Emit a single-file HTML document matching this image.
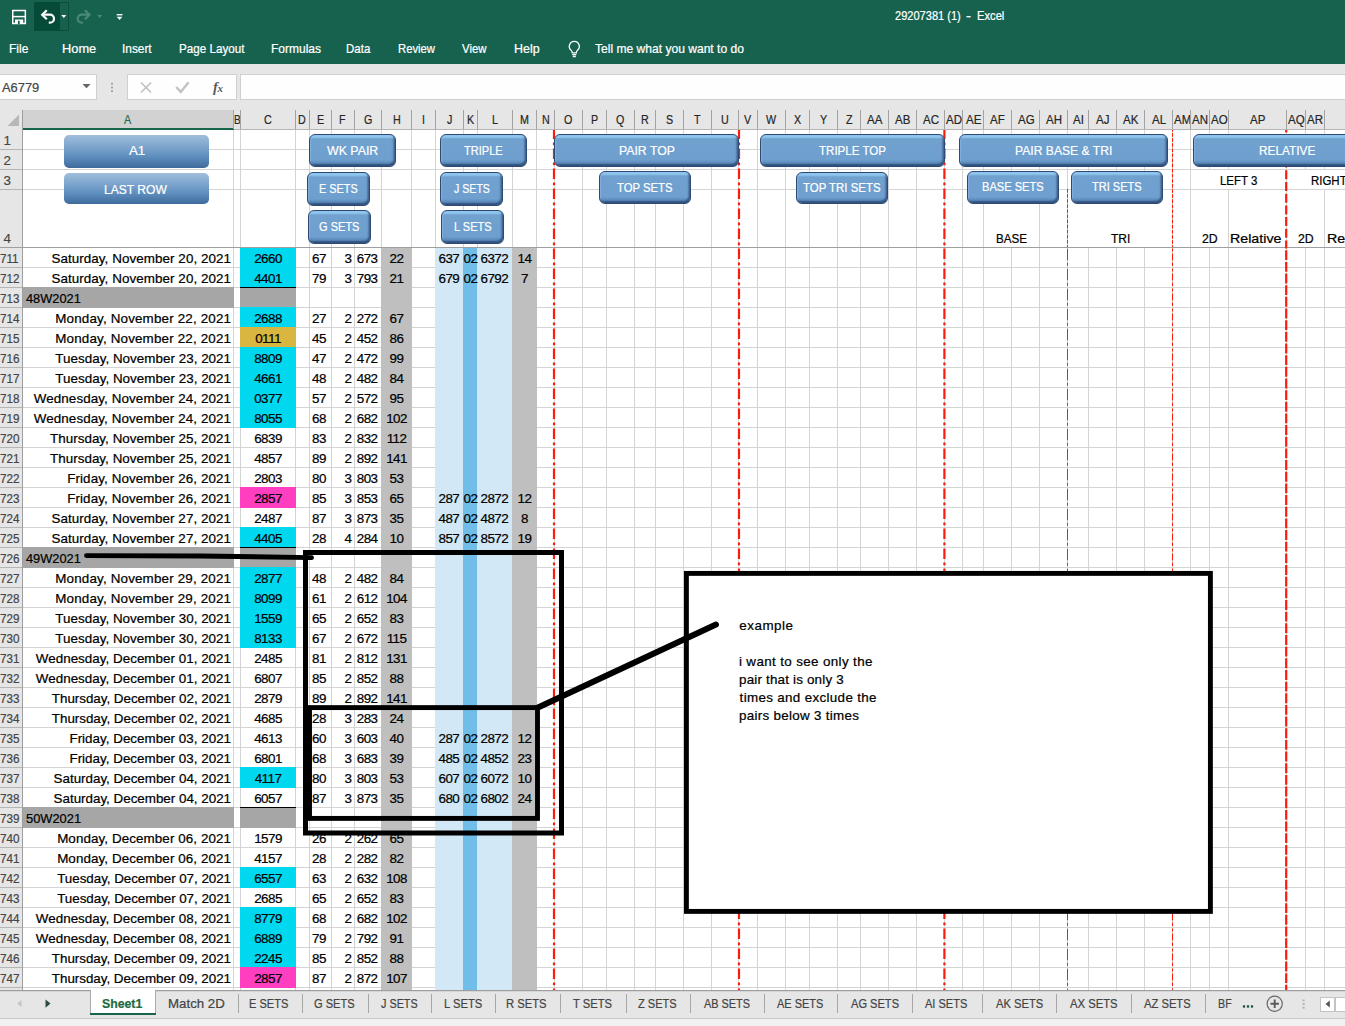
<!DOCTYPE html>
<html lang="en"><head><meta charset="utf-8"><title>29207381 (1) - Excel</title>
<style>

html,body{margin:0;padding:0}
body{width:1345px;height:1026px;overflow:hidden;background:#fff;position:relative;font-family:"Liberation Sans",sans-serif;color:#000}
div,span{box-sizing:border-box}
.ab,.t,.f,.v,.h,.x{position:absolute}
.x{white-space:pre;transform-origin:0 50%;-webkit-text-stroke:0.22px currentColor}
.t{white-space:pre;line-height:20px;height:20px;font-size:13.4px;overflow:visible;-webkit-text-stroke:0.22px currentColor}
.n{letter-spacing:-0.55px}
.r{text-align:right}.c{text-align:center}
.v{width:1px;background:#d4d4d4}
.h{height:1px;background:#d4d4d4}
.ui{color:#fff}
.ch{top:110px;height:18px;line-height:19px;font-size:13.4px;color:#444;text-align:center;position:absolute;white-space:pre}
.rh{left:0;width:22px;position:absolute;font-size:13.4px;color:#444;-webkit-text-stroke:0.15px currentColor;white-space:pre;line-height:20px;height:20px}
.btn{position:absolute;border-radius:6px;
 background:linear-gradient(#8fc6ee 0,#8fc6ee 2px,#70a1cf 4px,#6e9fce 80%,#5b89ba 92%,#46709f 100%);
 border:1.5px solid #2e4a74;box-shadow:inset -1.5px -2px 1.5px rgba(30,55,95,.6), inset 1px 0 1px rgba(150,200,240,.5)}
.gbtn{position:absolute;border-radius:5px;
 background:linear-gradient(#a1bedb 0,#7da5cd 35%,#5f8fbf 65%,#3e6b9b 100%)}
.bt{color:#fff}
.tab{color:#444}
.sep{position:absolute;top:994px;width:1px;height:19px;background:#a6a6a6}

</style></head><body>
<div class="ab" style="left:0;top:0;width:1345px;height:64px;background:#17614f"></div>
<div class="ab" style="left:34px;top:2px;width:35px;height:29px;background:#064b37"></div>
<div class="ab" style="left:60px;top:2px;width:9px;height:29px;background:#17604e;border:1px solid #0b4f3b;border-left:0"></div>
<svg class="ab" style="left:0;top:0" width="140" height="34" viewBox="0 0 140 34">
<g fill="none" stroke="#fff" stroke-width="1.5">
<path d="M12.75 10.55h12.6v12.9h-12.6z"/>
<path d="M12.75 16.6h12.6"/>
</g>
<path d="M15 19.6h8.2v4.4h-8.2z" fill="#fff"/>
<path d="M17.9 20.8h1.8v3.4h-1.8z" fill="#17614f"/>
<g fill="none" stroke="#fff" stroke-width="2.2" stroke-linejoin="miter">
<path d="M46.8 10.2l-4.6 4.5 4.6 4.5"/>
<path d="M43 14.7h7a4 4 0 0 1 0 8h-1.2"/>
</g>
<path d="M61.3 15.1h5l-2.5 3z" fill="#fff"/>
<g fill="none" stroke="#4a8976" stroke-width="2.2">
<path d="M84.9 10.2l4.6 4.5-4.6 4.5"/>
<path d="M88.7 14.7h-7a4 4 0 0 0 0 8h1.2"/>
</g>
<path d="M97.2 15.1h5l-2.5 3z" fill="#4a8976"/>
<path d="M116.7 14h5.7v1.4h-5.7z" fill="#fff"/>
<path d="M116.7 16.7h5.7l-2.85 3.4z" fill="#fff"/>
</svg>
<div class="x ui" style="left:895.10px;top:8px;font-size:12.4px;line-height:16px;height:16px;transform:scaleX(0.8921);margin-left:-0.55px;">29207381 (1)</div>
<div class="x ui" style="left:966.60px;top:8px;font-size:12.4px;line-height:16px;height:16px;transform:scaleX(1.2258);margin-left:-0.61px;">-</div>
<div class="x ui" style="left:977.60px;top:8px;font-size:12.4px;line-height:16px;height:16px;transform:scaleX(0.9027);margin-left:-0.90px;">Excel</div>
<div class="x ui" style="left:10.40px;top:41px;font-size:12.4px;line-height:17px;height:17px;transform:scaleX(0.9688);margin-left:-0.96px;">File</div>
<div class="x ui" style="left:63.50px;top:41px;font-size:12.4px;line-height:17px;height:17px;transform:scaleX(1.0362);margin-left:-1.03px;">Home</div>
<div class="x ui" style="left:123.40px;top:41px;font-size:12.4px;line-height:17px;height:17px;transform:scaleX(0.9570);margin-left:-1.07px;">Insert</div>
<div class="x ui" style="left:179.60px;top:41px;font-size:12.4px;line-height:17px;height:17px;transform:scaleX(0.9398);margin-left:-0.93px;">Page Layout</div>
<div class="x ui" style="left:271.50px;top:41px;font-size:12.4px;line-height:17px;height:17px;transform:scaleX(0.9685);margin-left:-0.96px;">Formulas</div>
<div class="x ui" style="left:347.40px;top:41px;font-size:12.4px;line-height:17px;height:17px;transform:scaleX(0.9273);margin-left:-0.92px;">Data</div>
<div class="x ui" style="left:398.70px;top:41px;font-size:12.4px;line-height:17px;height:17px;transform:scaleX(0.9098);margin-left:-0.90px;">Review</div>
<div class="x ui" style="left:462.30px;top:41px;font-size:12.4px;line-height:17px;height:17px;transform:scaleX(0.9190);margin-left:-0.00px;">View</div>
<div class="x ui" style="left:514.70px;top:41px;font-size:12.4px;line-height:17px;height:17px;transform:scaleX(1.0044);margin-left:-1.00px;">Help</div>
<div class="x ui" style="left:595.00px;top:41px;font-size:12.4px;line-height:17px;height:17px;transform:scaleX(0.9739);margin-left:-0.24px;">Tell me what you want to do</div>
<svg class="ab" style="left:566px;top:39px" width="16" height="20" viewBox="0 0 16 20"><g fill="none" stroke="#fff" stroke-width="1.3">
<path d="M8.3 2.4a5 5 0 0 0-3 9c.7.7.9 1.3.9 2.4h4.2c0-1.100.2-1.700.9-2.400a5 5 0 0 0-3-9z"/><path d="M6.300 15.700h4M6.800 17.500h3"/></g></svg>
<div class="ab" style="left:0;top:64px;width:1345px;height:46px;background:#e6e6e6"></div>
<div class="ab" style="left:-1px;top:74px;width:98px;height:26px;background:#fefefe;border:1px solid #d0d0d0"></div>
<div class="x " style="left:2.40px;top:79px;font-size:13.3px;line-height:17px;height:17px;color:#444;transform:scaleX(0.9673);margin-left:-0.00px;">A6779</div>
<svg class="ab" style="left:82px;top:83px" width="10" height="7"><path d="M0.5 1h8l-4 4.2z" fill="#666"/></svg>
<svg class="ab" style="left:110px;top:82px" width="5" height="12"><g fill="#a2a2a2"><rect x="1" y="0.8" width="2" height="1.800"/><rect x="1" y="4.600" width="2" height="1.800"/><rect x="1" y="8.200" width="2" height="1.8"/></g></svg>
<div class="ab" style="left:127px;top:74px;width:110px;height:26px;background:#fefefe;border:1px solid #d0d0d0"></div>
<svg class="ab" style="left:139px;top:80px" width="90" height="15" viewBox="0 0 90 15"><g fill="none" stroke="#c2c2c2" stroke-width="1.7"><path d="M2 2.5l10 10M12 2.5l-10 10"/><path d="M37.200 7l4.600 5 7.800-9.800" stroke-width="2.4"/></g></svg>
<div class="ab" style="left:213px;top:78px;font-family:'Liberation Serif',serif;font-style:italic;font-weight:bold;font-size:14.5px;line-height:18px;color:#5a5a5a;white-space:pre;letter-spacing:-0.3px">f<span style="font-size:11px">x</span></div>
<div class="ab" style="left:240px;top:74px;width:1107px;height:26px;background:#fefefe;border:1px solid #d0d0d0"></div>
<div class="ab" style="left:0;top:110px;width:1345px;height:20px;background:#e6e6e6"></div>
<svg class="ab" style="left:7px;top:114px" width="13" height="13"><path d="M12 0.5v11.5h-11.5z" fill="#b8b8b8"/></svg>
<div class="ab" style="left:23px;top:110px;width:210px;height:18px;background:#d2d2d2"></div>
<div class="ab" style="left:23px;top:128px;width:211px;height:2px;background:#17664a"></div>
<div class="x " style="left:124.44px;top:110px;font-size:13.4px;line-height:19px;height:19px;color:#1f6e45;transform:scaleX(0.8000);margin-left:-0.00px;">A</div>
<div class="ab" style="left:233px;top:110px;width:1px;height:19px;background:#a3a3a3"></div>
<div class="x " style="left:234.70px;top:110px;font-size:13.4px;line-height:19px;height:19px;color:#262626;transform:scaleX(0.7532);margin-left:-0.81px;">B</div>
<div class="ab" style="left:240px;top:110px;width:1px;height:19px;background:#a3a3a3"></div>
<div class="x " style="left:264.60px;top:110px;font-size:13.4px;line-height:19px;height:19px;color:#262626;transform:scaleX(0.8000);margin-left:-0.54px;">C</div>
<div class="ab" style="left:295px;top:110px;width:1px;height:19px;background:#a3a3a3"></div>
<div class="x " style="left:299.31px;top:110px;font-size:13.4px;line-height:19px;height:19px;color:#262626;transform:scaleX(0.8000);margin-left:-0.86px;">D</div>
<div class="ab" style="left:309px;top:110px;width:1px;height:19px;background:#a3a3a3"></div>
<div class="x " style="left:317.58px;top:110px;font-size:13.4px;line-height:19px;height:19px;color:#262626;transform:scaleX(0.8000);margin-left:-0.86px;">E</div>
<div class="ab" style="left:331px;top:110px;width:1px;height:19px;background:#a3a3a3"></div>
<div class="x " style="left:340.35px;top:110px;font-size:13.4px;line-height:19px;height:19px;color:#262626;transform:scaleX(0.8000);margin-left:-0.86px;">F</div>
<div class="ab" style="left:354px;top:110px;width:1px;height:19px;background:#a3a3a3"></div>
<div class="x " style="left:364.49px;top:110px;font-size:13.4px;line-height:19px;height:19px;color:#262626;transform:scaleX(0.8000);margin-left:-0.54px;">G</div>
<div class="ab" style="left:381px;top:110px;width:1px;height:19px;background:#a3a3a3"></div>
<div class="x " style="left:393.47px;top:110px;font-size:13.4px;line-height:19px;height:19px;color:#262626;transform:scaleX(0.8000);margin-left:-0.86px;">H</div>
<div class="ab" style="left:411px;top:110px;width:1px;height:19px;background:#a3a3a3"></div>
<div class="x " style="left:422.96px;top:110px;font-size:13.4px;line-height:19px;height:19px;color:#262626;transform:scaleX(0.8000);margin-left:-0.96px;">I</div>
<div class="ab" style="left:435px;top:110px;width:1px;height:19px;background:#a3a3a3"></div>
<div class="x " style="left:447.28px;top:110px;font-size:13.4px;line-height:19px;height:19px;color:#262626;transform:scaleX(0.8000);margin-left:-0.16px;">J</div>
<div class="ab" style="left:463px;top:110px;width:1px;height:19px;background:#a3a3a3"></div>
<div class="x " style="left:467.39px;top:110px;font-size:13.4px;line-height:19px;height:19px;color:#262626;transform:scaleX(0.8000);margin-left:-0.86px;">K</div>
<div class="ab" style="left:477px;top:110px;width:1px;height:19px;background:#a3a3a3"></div>
<div class="x " style="left:492.61px;top:110px;font-size:13.4px;line-height:19px;height:19px;color:#262626;transform:scaleX(0.8000);margin-left:-0.86px;">L</div>
<div class="ab" style="left:512px;top:110px;width:1px;height:19px;background:#a3a3a3"></div>
<div class="x " style="left:520.88px;top:110px;font-size:13.4px;line-height:19px;height:19px;color:#262626;transform:scaleX(0.8000);margin-left:-0.86px;">M</div>
<div class="ab" style="left:536px;top:110px;width:1px;height:19px;background:#a3a3a3"></div>
<div class="x " style="left:542.47px;top:110px;font-size:13.4px;line-height:19px;height:19px;color:#262626;transform:scaleX(0.8000);margin-left:-0.86px;">N</div>
<div class="ab" style="left:554px;top:110px;width:1px;height:19px;background:#a3a3a3"></div>
<div class="x " style="left:564.83px;top:110px;font-size:13.4px;line-height:19px;height:19px;color:#262626;transform:scaleX(0.8000);margin-left:-0.48px;">O</div>
<div class="ab" style="left:582px;top:110px;width:1px;height:19px;background:#a3a3a3"></div>
<div class="x " style="left:591.63px;top:110px;font-size:13.4px;line-height:19px;height:19px;color:#262626;transform:scaleX(0.8000);margin-left:-0.86px;">P</div>
<div class="ab" style="left:606px;top:110px;width:1px;height:19px;background:#a3a3a3"></div>
<div class="x " style="left:616.83px;top:110px;font-size:13.4px;line-height:19px;height:19px;color:#262626;transform:scaleX(0.8000);margin-left:-0.48px;">Q</div>
<div class="ab" style="left:634px;top:110px;width:1px;height:19px;background:#a3a3a3"></div>
<div class="x " style="left:641.78px;top:110px;font-size:13.4px;line-height:19px;height:19px;color:#262626;transform:scaleX(0.8000);margin-left:-0.86px;">R</div>
<div class="ab" style="left:655px;top:110px;width:1px;height:19px;background:#a3a3a3"></div>
<div class="x " style="left:666.39px;top:110px;font-size:13.4px;line-height:19px;height:19px;color:#262626;transform:scaleX(0.8000);margin-left:-0.48px;">S</div>
<div class="ab" style="left:683px;top:110px;width:1px;height:19px;background:#a3a3a3"></div>
<div class="x " style="left:694.44px;top:110px;font-size:13.4px;line-height:19px;height:19px;color:#262626;transform:scaleX(0.8000);margin-left:-0.21px;">T</div>
<div class="ab" style="left:711px;top:110px;width:1px;height:19px;background:#a3a3a3"></div>
<div class="x " style="left:721.94px;top:110px;font-size:13.4px;line-height:19px;height:19px;color:#262626;transform:scaleX(0.8000);margin-left:-0.80px;">U</div>
<div class="ab" style="left:738px;top:110px;width:1px;height:19px;background:#a3a3a3"></div>
<div class="x " style="left:744.44px;top:110px;font-size:13.4px;line-height:19px;height:19px;color:#262626;transform:scaleX(0.8000);margin-left:-0.00px;">V</div>
<div class="ab" style="left:757px;top:110px;width:1px;height:19px;background:#a3a3a3"></div>
<div class="x " style="left:766.43px;top:110px;font-size:13.4px;line-height:19px;height:19px;color:#262626;transform:scaleX(0.8000);margin-left:-0.00px;">W</div>
<div class="ab" style="left:785px;top:110px;width:1px;height:19px;background:#a3a3a3"></div>
<div class="x " style="left:794.12px;top:110px;font-size:13.4px;line-height:19px;height:19px;color:#262626;transform:scaleX(0.8000);margin-left:-0.21px;">X</div>
<div class="ab" style="left:809px;top:110px;width:1px;height:19px;background:#a3a3a3"></div>
<div class="x " style="left:820.15px;top:110px;font-size:13.4px;line-height:19px;height:19px;color:#262626;transform:scaleX(0.8000);margin-left:-0.21px;">Y</div>
<div class="ab" style="left:837px;top:110px;width:1px;height:19px;background:#a3a3a3"></div>
<div class="x " style="left:846.05px;top:110px;font-size:13.4px;line-height:19px;height:19px;color:#262626;transform:scaleX(0.8000);margin-left:-0.32px;">Z</div>
<div class="ab" style="left:860px;top:110px;width:1px;height:19px;background:#a3a3a3"></div>
<div class="x " style="left:866.84px;top:110px;font-size:13.4px;line-height:19px;height:19px;color:#262626;transform:scaleX(0.8600);margin-left:-0.00px;">AA</div>
<div class="ab" style="left:888px;top:110px;width:1px;height:19px;background:#a3a3a3"></div>
<div class="x " style="left:895.12px;top:110px;font-size:13.4px;line-height:19px;height:19px;color:#262626;transform:scaleX(0.8600);margin-left:-0.00px;">AB</div>
<div class="ab" style="left:916px;top:110px;width:1px;height:19px;background:#a3a3a3"></div>
<div class="x " style="left:922.72px;top:110px;font-size:13.4px;line-height:19px;height:19px;color:#262626;transform:scaleX(0.8600);margin-left:-0.00px;">AC</div>
<div class="ab" style="left:944px;top:110px;width:1px;height:19px;background:#a3a3a3"></div>
<div class="x " style="left:946.20px;top:110px;font-size:13.4px;line-height:19px;height:19px;color:#262626;transform:scaleX(0.8600);margin-left:-0.00px;">AD</div>
<div class="ab" style="left:962px;top:110px;width:1px;height:19px;background:#a3a3a3"></div>
<div class="x " style="left:965.57px;top:110px;font-size:13.4px;line-height:19px;height:19px;color:#262626;transform:scaleX(0.8600);margin-left:-0.00px;">AE</div>
<div class="ab" style="left:983px;top:110px;width:1px;height:19px;background:#a3a3a3"></div>
<div class="x " style="left:990.36px;top:110px;font-size:13.4px;line-height:19px;height:19px;color:#262626;transform:scaleX(0.8600);margin-left:-0.00px;">AF</div>
<div class="ab" style="left:1011px;top:110px;width:1px;height:19px;background:#a3a3a3"></div>
<div class="x " style="left:1017.61px;top:110px;font-size:13.4px;line-height:19px;height:19px;color:#262626;transform:scaleX(0.8600);margin-left:-0.00px;">AG</div>
<div class="ab" style="left:1039px;top:110px;width:1px;height:19px;background:#a3a3a3"></div>
<div class="x " style="left:1045.95px;top:110px;font-size:13.4px;line-height:19px;height:19px;color:#262626;transform:scaleX(0.8600);margin-left:-0.00px;">AH</div>
<div class="ab" style="left:1067px;top:110px;width:1px;height:19px;background:#a3a3a3"></div>
<div class="x " style="left:1073.07px;top:110px;font-size:13.4px;line-height:19px;height:19px;color:#262626;transform:scaleX(0.8600);margin-left:-0.00px;">AI</div>
<div class="ab" style="left:1088px;top:110px;width:1px;height:19px;background:#a3a3a3"></div>
<div class="x " style="left:1096.19px;top:110px;font-size:13.4px;line-height:19px;height:19px;color:#262626;transform:scaleX(0.8600);margin-left:-0.00px;">AJ</div>
<div class="ab" style="left:1116px;top:110px;width:1px;height:19px;background:#a3a3a3"></div>
<div class="x " style="left:1122.87px;top:110px;font-size:13.4px;line-height:19px;height:19px;color:#262626;transform:scaleX(0.8600);margin-left:-0.00px;">AK</div>
<div class="ab" style="left:1144px;top:110px;width:1px;height:19px;background:#a3a3a3"></div>
<div class="x " style="left:1151.64px;top:110px;font-size:13.4px;line-height:19px;height:19px;color:#262626;transform:scaleX(0.8600);margin-left:-0.00px;">AL</div>
<div class="ab" style="left:1172px;top:110px;width:1px;height:19px;background:#a3a3a3"></div>
<div class="x " style="left:1174.20px;top:110px;font-size:13.4px;line-height:19px;height:19px;color:#262626;transform:scaleX(0.8600);margin-left:-0.00px;">AM</div>
<div class="ab" style="left:1190px;top:110px;width:1px;height:19px;background:#a3a3a3"></div>
<div class="x " style="left:1192.45px;top:110px;font-size:13.4px;line-height:19px;height:19px;color:#262626;transform:scaleX(0.8600);margin-left:-0.00px;">AN</div>
<div class="ab" style="left:1209px;top:110px;width:1px;height:19px;background:#a3a3a3"></div>
<div class="x " style="left:1211.20px;top:110px;font-size:13.4px;line-height:19px;height:19px;color:#262626;transform:scaleX(0.8600);margin-left:-0.00px;">AO</div>
<div class="ab" style="left:1228px;top:110px;width:1px;height:19px;background:#a3a3a3"></div>
<div class="x " style="left:1250.12px;top:110px;font-size:13.4px;line-height:19px;height:19px;color:#262626;transform:scaleX(0.8600);margin-left:-0.00px;">AP</div>
<div class="ab" style="left:1286px;top:110px;width:1px;height:19px;background:#a3a3a3"></div>
<div class="x " style="left:1288.20px;top:110px;font-size:13.4px;line-height:19px;height:19px;color:#262626;transform:scaleX(0.8600);margin-left:-0.00px;">AQ</div>
<div class="ab" style="left:1305px;top:110px;width:1px;height:19px;background:#a3a3a3"></div>
<div class="x " style="left:1307.25px;top:110px;font-size:13.4px;line-height:19px;height:19px;color:#262626;transform:scaleX(0.8600);margin-left:-0.00px;">AR</div>
<div class="ab" style="left:1324px;top:110px;width:1px;height:19px;background:#a3a3a3"></div>
<div class="ab" style="left:234px;top:129px;width:1111px;height:1px;background:#b5b5b5"></div>
<div class="ab" style="left:23px;top:130px;width:1322px;height:860px;background:#fff"></div>
<div class="v" style="left:233px;top:130px;height:860px"></div>
<div class="v" style="left:240px;top:130px;height:860px"></div>
<div class="v" style="left:295px;top:130px;height:860px"></div>
<div class="v" style="left:309px;top:130px;height:860px"></div>
<div class="v" style="left:331px;top:130px;height:860px"></div>
<div class="v" style="left:354px;top:130px;height:860px"></div>
<div class="v" style="left:381px;top:130px;height:860px"></div>
<div class="v" style="left:411px;top:130px;height:860px"></div>
<div class="v" style="left:435px;top:130px;height:860px"></div>
<div class="v" style="left:463px;top:130px;height:860px"></div>
<div class="v" style="left:477px;top:130px;height:860px"></div>
<div class="v" style="left:512px;top:130px;height:860px"></div>
<div class="v" style="left:536px;top:130px;height:860px"></div>
<div class="v" style="left:554px;top:130px;height:860px"></div>
<div class="v" style="left:582px;top:130px;height:860px"></div>
<div class="v" style="left:606px;top:130px;height:860px"></div>
<div class="v" style="left:634px;top:130px;height:860px"></div>
<div class="v" style="left:655px;top:130px;height:860px"></div>
<div class="v" style="left:683px;top:130px;height:860px"></div>
<div class="v" style="left:711px;top:130px;height:860px"></div>
<div class="v" style="left:738px;top:130px;height:860px"></div>
<div class="v" style="left:757px;top:130px;height:860px"></div>
<div class="v" style="left:785px;top:130px;height:860px"></div>
<div class="v" style="left:809px;top:130px;height:860px"></div>
<div class="v" style="left:837px;top:130px;height:860px"></div>
<div class="v" style="left:860px;top:130px;height:860px"></div>
<div class="v" style="left:888px;top:130px;height:860px"></div>
<div class="v" style="left:916px;top:130px;height:860px"></div>
<div class="v" style="left:944px;top:130px;height:860px"></div>
<div class="v" style="left:962px;top:130px;height:860px"></div>
<div class="v" style="left:983px;top:130px;height:860px"></div>
<div class="v" style="left:1011px;top:130px;height:860px"></div>
<div class="v" style="left:1039px;top:130px;height:860px"></div>
<div class="v" style="left:1067px;top:130px;height:860px"></div>
<div class="v" style="left:1088px;top:130px;height:860px"></div>
<div class="v" style="left:1116px;top:130px;height:860px"></div>
<div class="v" style="left:1144px;top:130px;height:860px"></div>
<div class="v" style="left:1172px;top:130px;height:860px"></div>
<div class="v" style="left:1190px;top:130px;height:860px"></div>
<div class="v" style="left:1209px;top:130px;height:860px"></div>
<div class="v" style="left:1228px;top:130px;height:860px"></div>
<div class="v" style="left:1286px;top:130px;height:860px"></div>
<div class="v" style="left:1305px;top:130px;height:860px"></div>
<div class="v" style="left:1324px;top:130px;height:860px"></div>
<div class="h" style="left:23px;top:149px;width:1322px"></div>
<div class="h" style="left:23px;top:169px;width:1322px"></div>
<div class="h" style="left:23px;top:189px;width:1322px"></div>
<div class="h" style="left:23px;top:267px;width:1322px"></div>
<div class="h" style="left:23px;top:287px;width:1322px"></div>
<div class="h" style="left:23px;top:307px;width:1322px"></div>
<div class="h" style="left:23px;top:327px;width:1322px"></div>
<div class="h" style="left:23px;top:347px;width:1322px"></div>
<div class="h" style="left:23px;top:367px;width:1322px"></div>
<div class="h" style="left:23px;top:387px;width:1322px"></div>
<div class="h" style="left:23px;top:407px;width:1322px"></div>
<div class="h" style="left:23px;top:427px;width:1322px"></div>
<div class="h" style="left:23px;top:447px;width:1322px"></div>
<div class="h" style="left:23px;top:467px;width:1322px"></div>
<div class="h" style="left:23px;top:487px;width:1322px"></div>
<div class="h" style="left:23px;top:507px;width:1322px"></div>
<div class="h" style="left:23px;top:527px;width:1322px"></div>
<div class="h" style="left:23px;top:547px;width:1322px"></div>
<div class="h" style="left:23px;top:567px;width:1322px"></div>
<div class="h" style="left:23px;top:587px;width:1322px"></div>
<div class="h" style="left:23px;top:607px;width:1322px"></div>
<div class="h" style="left:23px;top:627px;width:1322px"></div>
<div class="h" style="left:23px;top:647px;width:1322px"></div>
<div class="h" style="left:23px;top:667px;width:1322px"></div>
<div class="h" style="left:23px;top:687px;width:1322px"></div>
<div class="h" style="left:23px;top:707px;width:1322px"></div>
<div class="h" style="left:23px;top:727px;width:1322px"></div>
<div class="h" style="left:23px;top:747px;width:1322px"></div>
<div class="h" style="left:23px;top:767px;width:1322px"></div>
<div class="h" style="left:23px;top:787px;width:1322px"></div>
<div class="h" style="left:23px;top:807px;width:1322px"></div>
<div class="h" style="left:23px;top:827px;width:1322px"></div>
<div class="h" style="left:23px;top:847px;width:1322px"></div>
<div class="h" style="left:23px;top:867px;width:1322px"></div>
<div class="h" style="left:23px;top:887px;width:1322px"></div>
<div class="h" style="left:23px;top:907px;width:1322px"></div>
<div class="h" style="left:23px;top:927px;width:1322px"></div>
<div class="h" style="left:23px;top:947px;width:1322px"></div>
<div class="h" style="left:23px;top:967px;width:1322px"></div>
<div class="h" style="left:23px;top:987px;width:1322px"></div>
<div class="ab" style="left:1209px;top:170px;width:1px;height:19px;background:#fff"></div>
<div class="ab" style="left:1228px;top:170px;width:1px;height:19px;background:#fff"></div>
<div class="ab" style="left:1305px;top:170px;width:1px;height:19px;background:#fff"></div>
<div class="ab" style="left:1324px;top:170px;width:1px;height:19px;background:#fff"></div>
<div class="ab" style="left:1011px;top:190px;width:1px;height:57px;background:#fff"></div>
<div class="ab" style="left:1088px;top:190px;width:1px;height:57px;background:#fff"></div>
<div class="ab" style="left:1116px;top:190px;width:1px;height:57px;background:#fff"></div>
<div class="ab" style="left:1144px;top:190px;width:1px;height:57px;background:#fff"></div>
<div class="ab" style="left:1209px;top:190px;width:1px;height:57px;background:#fff"></div>
<div class="ab" style="left:1305px;top:190px;width:1px;height:57px;background:#fff"></div>
<div class="f" style="left:381px;top:247px;width:31px;height:743px;background:#bfbfbf"></div>
<div class="f" style="left:435px;top:247px;width:29px;height:743px;background:#d2e8f6"></div>
<div class="f" style="left:463px;top:247px;width:15px;height:743px;background:#6fbde8"></div>
<div class="f" style="left:477px;top:247px;width:36px;height:743px;background:#d2e8f6"></div>
<div class="f" style="left:512px;top:247px;width:25px;height:743px;background:#bfbfbf"></div>
<div class="f" style="left:240px;top:247px;width:56px;height:21px;background:#00d8f0"></div>
<div class="f" style="left:240px;top:267px;width:56px;height:21px;background:#00d8f0"></div>
<div class="f" style="left:22px;top:287px;width:212px;height:21px;background:#a6a6a6"></div>
<div class="f" style="left:240px;top:287px;width:56px;height:21px;background:#a6a6a6"></div>
<div class="f" style="left:240px;top:307px;width:56px;height:21px;background:#00d8f0"></div>
<div class="f" style="left:240px;top:327px;width:56px;height:21px;background:#d9b640"></div>
<div class="f" style="left:240px;top:347px;width:56px;height:21px;background:#00d8f0"></div>
<div class="f" style="left:240px;top:367px;width:56px;height:21px;background:#00d8f0"></div>
<div class="f" style="left:240px;top:387px;width:56px;height:21px;background:#00d8f0"></div>
<div class="f" style="left:240px;top:407px;width:56px;height:21px;background:#00d8f0"></div>
<div class="f" style="left:240px;top:487px;width:56px;height:21px;background:#ff3fc0"></div>
<div class="f" style="left:240px;top:527px;width:56px;height:21px;background:#00d8f0"></div>
<div class="f" style="left:22px;top:547px;width:212px;height:21px;background:#a6a6a6"></div>
<div class="f" style="left:240px;top:547px;width:56px;height:21px;background:#a6a6a6"></div>
<div class="f" style="left:240px;top:567px;width:56px;height:21px;background:#00d8f0"></div>
<div class="f" style="left:240px;top:587px;width:56px;height:21px;background:#00d8f0"></div>
<div class="f" style="left:240px;top:607px;width:56px;height:21px;background:#00d8f0"></div>
<div class="f" style="left:240px;top:627px;width:56px;height:21px;background:#00d8f0"></div>
<div class="f" style="left:240px;top:767px;width:56px;height:21px;background:#00d8f0"></div>
<div class="f" style="left:22px;top:807px;width:212px;height:21px;background:#a6a6a6"></div>
<div class="f" style="left:240px;top:807px;width:56px;height:21px;background:#a6a6a6"></div>
<div class="f" style="left:240px;top:867px;width:56px;height:21px;background:#00d8f0"></div>
<div class="f" style="left:240px;top:907px;width:56px;height:21px;background:#00d8f0"></div>
<div class="f" style="left:240px;top:927px;width:56px;height:21px;background:#00d8f0"></div>
<div class="f" style="left:240px;top:947px;width:56px;height:21px;background:#00d8f0"></div>
<div class="f" style="left:240px;top:967px;width:56px;height:21px;background:#ff3fc0"></div>
<div class="ab" style="left:240px;top:287px;width:56px;height:1px;background:#000"></div>
<div class="ab" style="left:240px;top:547px;width:56px;height:1px;background:#000"></div>
<div class="ab" style="left:240px;top:807px;width:56px;height:1px;background:#000"></div>
<div class="ab" style="left:0;top:130px;width:22px;height:860px;background:#e6e6e6"></div>
<div class="ab" style="left:22px;top:110px;width:1px;height:880px;background:#9f9f9f"></div>
<div class="ab" style="left:0;top:149px;width:22px;height:1px;background:#b5b5b5"></div>
<div class="ab" style="left:0;top:169px;width:22px;height:1px;background:#b5b5b5"></div>
<div class="ab" style="left:0;top:189px;width:22px;height:1px;background:#b5b5b5"></div>
<div class="ab" style="left:0;top:267px;width:22px;height:1px;background:#b5b5b5"></div>
<div class="ab" style="left:0;top:287px;width:22px;height:1px;background:#b5b5b5"></div>
<div class="ab" style="left:0;top:307px;width:22px;height:1px;background:#b5b5b5"></div>
<div class="ab" style="left:0;top:327px;width:22px;height:1px;background:#b5b5b5"></div>
<div class="ab" style="left:0;top:347px;width:22px;height:1px;background:#b5b5b5"></div>
<div class="ab" style="left:0;top:367px;width:22px;height:1px;background:#b5b5b5"></div>
<div class="ab" style="left:0;top:387px;width:22px;height:1px;background:#b5b5b5"></div>
<div class="ab" style="left:0;top:407px;width:22px;height:1px;background:#b5b5b5"></div>
<div class="ab" style="left:0;top:427px;width:22px;height:1px;background:#b5b5b5"></div>
<div class="ab" style="left:0;top:447px;width:22px;height:1px;background:#b5b5b5"></div>
<div class="ab" style="left:0;top:467px;width:22px;height:1px;background:#b5b5b5"></div>
<div class="ab" style="left:0;top:487px;width:22px;height:1px;background:#b5b5b5"></div>
<div class="ab" style="left:0;top:507px;width:22px;height:1px;background:#b5b5b5"></div>
<div class="ab" style="left:0;top:527px;width:22px;height:1px;background:#b5b5b5"></div>
<div class="ab" style="left:0;top:547px;width:22px;height:1px;background:#b5b5b5"></div>
<div class="ab" style="left:0;top:567px;width:22px;height:1px;background:#b5b5b5"></div>
<div class="ab" style="left:0;top:587px;width:22px;height:1px;background:#b5b5b5"></div>
<div class="ab" style="left:0;top:607px;width:22px;height:1px;background:#b5b5b5"></div>
<div class="ab" style="left:0;top:627px;width:22px;height:1px;background:#b5b5b5"></div>
<div class="ab" style="left:0;top:647px;width:22px;height:1px;background:#b5b5b5"></div>
<div class="ab" style="left:0;top:667px;width:22px;height:1px;background:#b5b5b5"></div>
<div class="ab" style="left:0;top:687px;width:22px;height:1px;background:#b5b5b5"></div>
<div class="ab" style="left:0;top:707px;width:22px;height:1px;background:#b5b5b5"></div>
<div class="ab" style="left:0;top:727px;width:22px;height:1px;background:#b5b5b5"></div>
<div class="ab" style="left:0;top:747px;width:22px;height:1px;background:#b5b5b5"></div>
<div class="ab" style="left:0;top:767px;width:22px;height:1px;background:#b5b5b5"></div>
<div class="ab" style="left:0;top:787px;width:22px;height:1px;background:#b5b5b5"></div>
<div class="ab" style="left:0;top:807px;width:22px;height:1px;background:#b5b5b5"></div>
<div class="ab" style="left:0;top:827px;width:22px;height:1px;background:#b5b5b5"></div>
<div class="ab" style="left:0;top:847px;width:22px;height:1px;background:#b5b5b5"></div>
<div class="ab" style="left:0;top:867px;width:22px;height:1px;background:#b5b5b5"></div>
<div class="ab" style="left:0;top:887px;width:22px;height:1px;background:#b5b5b5"></div>
<div class="ab" style="left:0;top:907px;width:22px;height:1px;background:#b5b5b5"></div>
<div class="ab" style="left:0;top:927px;width:22px;height:1px;background:#b5b5b5"></div>
<div class="ab" style="left:0;top:947px;width:22px;height:1px;background:#b5b5b5"></div>
<div class="ab" style="left:0;top:967px;width:22px;height:1px;background:#b5b5b5"></div>
<div class="ab" style="left:0;top:987px;width:22px;height:1px;background:#b5b5b5"></div>
<div class="rh" style="top:131px;padding-left:3.5px">1</div>
<div class="rh" style="top:151px;padding-left:3.5px">2</div>
<div class="rh" style="top:171px;padding-left:3.5px">3</div>
<div class="rh" style="top:229px;padding-left:3.5px">4</div>
<div class="x " style="left:0.90px;top:249px;font-size:13.4px;line-height:20px;height:20px;color:#444;transform:scaleX(0.8706);margin-left:-0.58px;">711</div>
<div class="x " style="left:0.90px;top:269px;font-size:13.4px;line-height:20px;height:20px;color:#444;transform:scaleX(0.8706);margin-left:-0.58px;">712</div>
<div class="x " style="left:0.90px;top:289px;font-size:13.4px;line-height:20px;height:20px;color:#444;transform:scaleX(0.8706);margin-left:-0.58px;">713</div>
<div class="x " style="left:0.90px;top:309px;font-size:13.4px;line-height:20px;height:20px;color:#444;transform:scaleX(0.8706);margin-left:-0.58px;">714</div>
<div class="x " style="left:0.90px;top:329px;font-size:13.4px;line-height:20px;height:20px;color:#444;transform:scaleX(0.8706);margin-left:-0.58px;">715</div>
<div class="x " style="left:0.90px;top:349px;font-size:13.4px;line-height:20px;height:20px;color:#444;transform:scaleX(0.8706);margin-left:-0.58px;">716</div>
<div class="x " style="left:0.90px;top:369px;font-size:13.4px;line-height:20px;height:20px;color:#444;transform:scaleX(0.8706);margin-left:-0.58px;">717</div>
<div class="x " style="left:0.90px;top:389px;font-size:13.4px;line-height:20px;height:20px;color:#444;transform:scaleX(0.8706);margin-left:-0.58px;">718</div>
<div class="x " style="left:0.90px;top:409px;font-size:13.4px;line-height:20px;height:20px;color:#444;transform:scaleX(0.8706);margin-left:-0.58px;">719</div>
<div class="x " style="left:0.90px;top:429px;font-size:13.4px;line-height:20px;height:20px;color:#444;transform:scaleX(0.8706);margin-left:-0.58px;">720</div>
<div class="x " style="left:0.90px;top:449px;font-size:13.4px;line-height:20px;height:20px;color:#444;transform:scaleX(0.8706);margin-left:-0.58px;">721</div>
<div class="x " style="left:0.90px;top:469px;font-size:13.4px;line-height:20px;height:20px;color:#444;transform:scaleX(0.8706);margin-left:-0.58px;">722</div>
<div class="x " style="left:0.90px;top:489px;font-size:13.4px;line-height:20px;height:20px;color:#444;transform:scaleX(0.8706);margin-left:-0.58px;">723</div>
<div class="x " style="left:0.90px;top:509px;font-size:13.4px;line-height:20px;height:20px;color:#444;transform:scaleX(0.8706);margin-left:-0.58px;">724</div>
<div class="x " style="left:0.90px;top:529px;font-size:13.4px;line-height:20px;height:20px;color:#444;transform:scaleX(0.8706);margin-left:-0.58px;">725</div>
<div class="x " style="left:0.90px;top:549px;font-size:13.4px;line-height:20px;height:20px;color:#444;transform:scaleX(0.8706);margin-left:-0.58px;">726</div>
<div class="x " style="left:0.90px;top:569px;font-size:13.4px;line-height:20px;height:20px;color:#444;transform:scaleX(0.8706);margin-left:-0.58px;">727</div>
<div class="x " style="left:0.90px;top:589px;font-size:13.4px;line-height:20px;height:20px;color:#444;transform:scaleX(0.8706);margin-left:-0.58px;">728</div>
<div class="x " style="left:0.90px;top:609px;font-size:13.4px;line-height:20px;height:20px;color:#444;transform:scaleX(0.8706);margin-left:-0.58px;">729</div>
<div class="x " style="left:0.90px;top:629px;font-size:13.4px;line-height:20px;height:20px;color:#444;transform:scaleX(0.8706);margin-left:-0.58px;">730</div>
<div class="x " style="left:0.90px;top:649px;font-size:13.4px;line-height:20px;height:20px;color:#444;transform:scaleX(0.8706);margin-left:-0.58px;">731</div>
<div class="x " style="left:0.90px;top:669px;font-size:13.4px;line-height:20px;height:20px;color:#444;transform:scaleX(0.8706);margin-left:-0.58px;">732</div>
<div class="x " style="left:0.90px;top:689px;font-size:13.4px;line-height:20px;height:20px;color:#444;transform:scaleX(0.8706);margin-left:-0.58px;">733</div>
<div class="x " style="left:0.90px;top:709px;font-size:13.4px;line-height:20px;height:20px;color:#444;transform:scaleX(0.8706);margin-left:-0.58px;">734</div>
<div class="x " style="left:0.90px;top:729px;font-size:13.4px;line-height:20px;height:20px;color:#444;transform:scaleX(0.8706);margin-left:-0.58px;">735</div>
<div class="x " style="left:0.90px;top:749px;font-size:13.4px;line-height:20px;height:20px;color:#444;transform:scaleX(0.8706);margin-left:-0.58px;">736</div>
<div class="x " style="left:0.90px;top:769px;font-size:13.4px;line-height:20px;height:20px;color:#444;transform:scaleX(0.8706);margin-left:-0.58px;">737</div>
<div class="x " style="left:0.90px;top:789px;font-size:13.4px;line-height:20px;height:20px;color:#444;transform:scaleX(0.8706);margin-left:-0.58px;">738</div>
<div class="x " style="left:0.90px;top:809px;font-size:13.4px;line-height:20px;height:20px;color:#444;transform:scaleX(0.8706);margin-left:-0.58px;">739</div>
<div class="x " style="left:0.90px;top:829px;font-size:13.4px;line-height:20px;height:20px;color:#444;transform:scaleX(0.8706);margin-left:-0.58px;">740</div>
<div class="x " style="left:0.90px;top:849px;font-size:13.4px;line-height:20px;height:20px;color:#444;transform:scaleX(0.8706);margin-left:-0.58px;">741</div>
<div class="x " style="left:0.90px;top:869px;font-size:13.4px;line-height:20px;height:20px;color:#444;transform:scaleX(0.8706);margin-left:-0.58px;">742</div>
<div class="x " style="left:0.90px;top:889px;font-size:13.4px;line-height:20px;height:20px;color:#444;transform:scaleX(0.8706);margin-left:-0.58px;">743</div>
<div class="x " style="left:0.90px;top:909px;font-size:13.4px;line-height:20px;height:20px;color:#444;transform:scaleX(0.8706);margin-left:-0.58px;">744</div>
<div class="x " style="left:0.90px;top:929px;font-size:13.4px;line-height:20px;height:20px;color:#444;transform:scaleX(0.8706);margin-left:-0.58px;">745</div>
<div class="x " style="left:0.90px;top:949px;font-size:13.4px;line-height:20px;height:20px;color:#444;transform:scaleX(0.8706);margin-left:-0.58px;">746</div>
<div class="x " style="left:0.90px;top:969px;font-size:13.4px;line-height:20px;height:20px;color:#444;transform:scaleX(0.8706);margin-left:-0.58px;">747</div>
<div class="ab" style="left:0;top:247px;width:1345px;height:1px;background:#9f9f9f"></div>
<div class="x " style="left:52.00px;top:249px;font-size:13.4px;line-height:20px;height:20px;letter-spacing:0.075px;margin-left:-0.60px;">Saturday, November 20, 2021</div>
<div class="t c n" style="left:221px;width:94px;top:249px">2660</div>
<div class="t n" style="left:312.0px;top:249px">67</div>
<div class="t r n" style="left:232px;width:119.5px;top:249px">3</div>
<div class="t n" style="left:356.8px;top:249px">673</div>
<div class="t c n" style="left:362px;width:69px;top:249px">22</div>
<div class="t n" style="left:438.5px;top:249px">637</div>
<div class="t c n" style="left:444px;width:53px;top:249px">02</div>
<div class="t n" style="left:480.5px;top:249px">6372</div>
<div class="t c n" style="left:493px;width:63px;top:249px">14</div>
<div class="x " style="left:52.00px;top:269px;font-size:13.4px;line-height:20px;height:20px;letter-spacing:0.075px;margin-left:-0.60px;">Saturday, November 20, 2021</div>
<div class="t c n" style="left:221px;width:94px;top:269px">4401</div>
<div class="t n" style="left:312.0px;top:269px">79</div>
<div class="t r n" style="left:232px;width:119.5px;top:269px">3</div>
<div class="t n" style="left:356.8px;top:269px">793</div>
<div class="t c n" style="left:362px;width:69px;top:269px">21</div>
<div class="t n" style="left:438.5px;top:269px">679</div>
<div class="t c n" style="left:444px;width:53px;top:269px">02</div>
<div class="t n" style="left:480.5px;top:269px">6792</div>
<div class="t c n" style="left:493px;width:63px;top:269px">7</div>
<div class="x " style="left:26.00px;top:289px;font-size:13.4px;line-height:20px;height:20px;transform:scaleX(0.9561);margin-left:-0.26px;">48W2021</div>
<div class="x " style="left:56.30px;top:309px;font-size:13.4px;line-height:20px;height:20px;letter-spacing:0.170px;margin-left:-1.07px;">Monday, November 22, 2021</div>
<div class="t c n" style="left:221px;width:94px;top:309px">2688</div>
<div class="t n" style="left:312.0px;top:309px">27</div>
<div class="t r n" style="left:232px;width:119.5px;top:309px">2</div>
<div class="t n" style="left:356.8px;top:309px">272</div>
<div class="t c n" style="left:362px;width:69px;top:309px">67</div>
<div class="x " style="left:56.30px;top:329px;font-size:13.4px;line-height:20px;height:20px;letter-spacing:0.170px;margin-left:-1.07px;">Monday, November 22, 2021</div>
<div class="t c n" style="left:221px;width:94px;top:329px">0111</div>
<div class="t n" style="left:312.0px;top:329px">45</div>
<div class="t r n" style="left:232px;width:119.5px;top:329px">2</div>
<div class="t n" style="left:356.8px;top:329px">452</div>
<div class="t c n" style="left:362px;width:69px;top:329px">86</div>
<div class="x " style="left:55.60px;top:349px;font-size:13.4px;line-height:20px;height:20px;letter-spacing:0.031px;margin-left:-0.27px;">Tuesday, November 23, 2021</div>
<div class="t c n" style="left:221px;width:94px;top:349px">8809</div>
<div class="t n" style="left:312.0px;top:349px">47</div>
<div class="t r n" style="left:232px;width:119.5px;top:349px">2</div>
<div class="t n" style="left:356.8px;top:349px">472</div>
<div class="t c n" style="left:362px;width:69px;top:349px">99</div>
<div class="x " style="left:55.60px;top:369px;font-size:13.4px;line-height:20px;height:20px;letter-spacing:0.031px;margin-left:-0.27px;">Tuesday, November 23, 2021</div>
<div class="t c n" style="left:221px;width:94px;top:369px">4661</div>
<div class="t n" style="left:312.0px;top:369px">48</div>
<div class="t r n" style="left:232px;width:119.5px;top:369px">2</div>
<div class="t n" style="left:356.8px;top:369px">482</div>
<div class="t c n" style="left:362px;width:69px;top:369px">84</div>
<div class="x " style="left:33.70px;top:389px;font-size:13.4px;line-height:20px;height:20px;letter-spacing:0.103px;margin-left:-0.00px;">Wednesday, November 24, 2021</div>
<div class="t c n" style="left:221px;width:94px;top:389px">0377</div>
<div class="t n" style="left:312.0px;top:389px">57</div>
<div class="t r n" style="left:232px;width:119.5px;top:389px">2</div>
<div class="t n" style="left:356.8px;top:389px">572</div>
<div class="t c n" style="left:362px;width:69px;top:389px">95</div>
<div class="x " style="left:33.70px;top:409px;font-size:13.4px;line-height:20px;height:20px;letter-spacing:0.103px;margin-left:-0.00px;">Wednesday, November 24, 2021</div>
<div class="t c n" style="left:221px;width:94px;top:409px">8055</div>
<div class="t n" style="left:312.0px;top:409px">68</div>
<div class="t r n" style="left:232px;width:119.5px;top:409px">2</div>
<div class="t n" style="left:356.8px;top:409px">682</div>
<div class="t c n" style="left:362px;width:69px;top:409px">102</div>
<div class="x " style="left:50.20px;top:429px;font-size:13.4px;line-height:20px;height:20px;letter-spacing:0.047px;margin-left:-0.27px;">Thursday, November 25, 2021</div>
<div class="t c n" style="left:221px;width:94px;top:429px">6839</div>
<div class="t n" style="left:312.0px;top:429px">83</div>
<div class="t r n" style="left:232px;width:119.5px;top:429px">2</div>
<div class="t n" style="left:356.8px;top:429px">832</div>
<div class="t c n" style="left:362px;width:69px;top:429px">112</div>
<div class="x " style="left:50.20px;top:449px;font-size:13.4px;line-height:20px;height:20px;letter-spacing:0.047px;margin-left:-0.27px;">Thursday, November 25, 2021</div>
<div class="t c n" style="left:221px;width:94px;top:449px">4857</div>
<div class="t n" style="left:312.0px;top:449px">89</div>
<div class="t r n" style="left:232px;width:119.5px;top:449px">2</div>
<div class="t n" style="left:356.8px;top:449px">892</div>
<div class="t c n" style="left:362px;width:69px;top:449px">141</div>
<div class="x " style="left:68.20px;top:469px;font-size:13.4px;line-height:20px;height:20px;letter-spacing:0.110px;margin-left:-1.07px;">Friday, November 26, 2021</div>
<div class="t c n" style="left:221px;width:94px;top:469px">2803</div>
<div class="t n" style="left:312.0px;top:469px">80</div>
<div class="t r n" style="left:232px;width:119.5px;top:469px">3</div>
<div class="t n" style="left:356.8px;top:469px">803</div>
<div class="t c n" style="left:362px;width:69px;top:469px">53</div>
<div class="x " style="left:68.20px;top:489px;font-size:13.4px;line-height:20px;height:20px;letter-spacing:0.110px;margin-left:-1.07px;">Friday, November 26, 2021</div>
<div class="t c n" style="left:221px;width:94px;top:489px">2857</div>
<div class="t n" style="left:312.0px;top:489px">85</div>
<div class="t r n" style="left:232px;width:119.5px;top:489px">3</div>
<div class="t n" style="left:356.8px;top:489px">853</div>
<div class="t c n" style="left:362px;width:69px;top:489px">65</div>
<div class="t n" style="left:438.5px;top:489px">287</div>
<div class="t c n" style="left:444px;width:53px;top:489px">02</div>
<div class="t n" style="left:480.5px;top:489px">2872</div>
<div class="t c n" style="left:493px;width:63px;top:489px">12</div>
<div class="x " style="left:52.00px;top:509px;font-size:13.4px;line-height:20px;height:20px;letter-spacing:0.075px;margin-left:-0.60px;">Saturday, November 27, 2021</div>
<div class="t c n" style="left:221px;width:94px;top:509px">2487</div>
<div class="t n" style="left:312.0px;top:509px">87</div>
<div class="t r n" style="left:232px;width:119.5px;top:509px">3</div>
<div class="t n" style="left:356.8px;top:509px">873</div>
<div class="t c n" style="left:362px;width:69px;top:509px">35</div>
<div class="t n" style="left:438.5px;top:509px">487</div>
<div class="t c n" style="left:444px;width:53px;top:509px">02</div>
<div class="t n" style="left:480.5px;top:509px">4872</div>
<div class="t c n" style="left:493px;width:63px;top:509px">8</div>
<div class="x " style="left:52.00px;top:529px;font-size:13.4px;line-height:20px;height:20px;letter-spacing:0.075px;margin-left:-0.60px;">Saturday, November 27, 2021</div>
<div class="t c n" style="left:221px;width:94px;top:529px">4405</div>
<div class="t n" style="left:312.0px;top:529px">28</div>
<div class="t r n" style="left:232px;width:119.5px;top:529px">4</div>
<div class="t n" style="left:356.8px;top:529px">284</div>
<div class="t c n" style="left:362px;width:69px;top:529px">10</div>
<div class="t n" style="left:438.5px;top:529px">857</div>
<div class="t c n" style="left:444px;width:53px;top:529px">02</div>
<div class="t n" style="left:480.5px;top:529px">8572</div>
<div class="t c n" style="left:493px;width:63px;top:529px">19</div>
<div class="x " style="left:26.00px;top:549px;font-size:13.4px;line-height:20px;height:20px;transform:scaleX(0.9561);margin-left:-0.26px;">49W2021</div>
<div class="x " style="left:56.30px;top:569px;font-size:13.4px;line-height:20px;height:20px;letter-spacing:0.170px;margin-left:-1.07px;">Monday, November 29, 2021</div>
<div class="t c n" style="left:221px;width:94px;top:569px">2877</div>
<div class="t n" style="left:312.0px;top:569px">48</div>
<div class="t r n" style="left:232px;width:119.5px;top:569px">2</div>
<div class="t n" style="left:356.8px;top:569px">482</div>
<div class="t c n" style="left:362px;width:69px;top:569px">84</div>
<div class="x " style="left:56.30px;top:589px;font-size:13.4px;line-height:20px;height:20px;letter-spacing:0.170px;margin-left:-1.07px;">Monday, November 29, 2021</div>
<div class="t c n" style="left:221px;width:94px;top:589px">8099</div>
<div class="t n" style="left:312.0px;top:589px">61</div>
<div class="t r n" style="left:232px;width:119.5px;top:589px">2</div>
<div class="t n" style="left:356.8px;top:589px">612</div>
<div class="t c n" style="left:362px;width:69px;top:589px">104</div>
<div class="x " style="left:55.60px;top:609px;font-size:13.4px;line-height:20px;height:20px;letter-spacing:0.031px;margin-left:-0.27px;">Tuesday, November 30, 2021</div>
<div class="t c n" style="left:221px;width:94px;top:609px">1559</div>
<div class="t n" style="left:312.0px;top:609px">65</div>
<div class="t r n" style="left:232px;width:119.5px;top:609px">2</div>
<div class="t n" style="left:356.8px;top:609px">652</div>
<div class="t c n" style="left:362px;width:69px;top:609px">83</div>
<div class="x " style="left:55.60px;top:629px;font-size:13.4px;line-height:20px;height:20px;letter-spacing:0.031px;margin-left:-0.27px;">Tuesday, November 30, 2021</div>
<div class="t c n" style="left:221px;width:94px;top:629px">8133</div>
<div class="t n" style="left:312.0px;top:629px">67</div>
<div class="t r n" style="left:232px;width:119.5px;top:629px">2</div>
<div class="t n" style="left:356.8px;top:629px">672</div>
<div class="t c n" style="left:362px;width:69px;top:629px">115</div>
<div class="x " style="left:35.80px;top:649px;font-size:13.4px;line-height:20px;height:20px;letter-spacing:0.025px;margin-left:-0.00px;">Wednesday, December 01, 2021</div>
<div class="t c n" style="left:221px;width:94px;top:649px">2485</div>
<div class="t n" style="left:312.0px;top:649px">81</div>
<div class="t r n" style="left:232px;width:119.5px;top:649px">2</div>
<div class="t n" style="left:356.8px;top:649px">812</div>
<div class="t c n" style="left:362px;width:69px;top:649px">131</div>
<div class="x " style="left:35.80px;top:669px;font-size:13.4px;line-height:20px;height:20px;letter-spacing:0.025px;margin-left:-0.00px;">Wednesday, December 01, 2021</div>
<div class="t c n" style="left:221px;width:94px;top:669px">6807</div>
<div class="t n" style="left:312.0px;top:669px">85</div>
<div class="t r n" style="left:232px;width:119.5px;top:669px">2</div>
<div class="t n" style="left:356.8px;top:669px">852</div>
<div class="t c n" style="left:362px;width:69px;top:669px">88</div>
<div class="x " style="left:52.10px;top:689px;font-size:13.4px;line-height:20px;height:20px;letter-spacing:-0.027px;margin-left:-0.27px;">Thursday, December 02, 2021</div>
<div class="t c n" style="left:221px;width:94px;top:689px">2879</div>
<div class="t n" style="left:312.0px;top:689px">89</div>
<div class="t r n" style="left:232px;width:119.5px;top:689px">2</div>
<div class="t n" style="left:356.8px;top:689px">892</div>
<div class="t c n" style="left:362px;width:69px;top:689px">141</div>
<div class="x " style="left:52.10px;top:709px;font-size:13.4px;line-height:20px;height:20px;letter-spacing:-0.027px;margin-left:-0.27px;">Thursday, December 02, 2021</div>
<div class="t c n" style="left:221px;width:94px;top:709px">4685</div>
<div class="t n" style="left:312.0px;top:709px">28</div>
<div class="t r n" style="left:232px;width:119.5px;top:709px">3</div>
<div class="t n" style="left:356.8px;top:709px">283</div>
<div class="t c n" style="left:362px;width:69px;top:709px">24</div>
<div class="x " style="left:70.50px;top:729px;font-size:13.4px;line-height:20px;height:20px;letter-spacing:0.014px;margin-left:-1.07px;">Friday, December 03, 2021</div>
<div class="t c n" style="left:221px;width:94px;top:729px">4613</div>
<div class="t n" style="left:312.0px;top:729px">60</div>
<div class="t r n" style="left:232px;width:119.5px;top:729px">3</div>
<div class="t n" style="left:356.8px;top:729px">603</div>
<div class="t c n" style="left:362px;width:69px;top:729px">40</div>
<div class="t n" style="left:438.5px;top:729px">287</div>
<div class="t c n" style="left:444px;width:53px;top:729px">02</div>
<div class="t n" style="left:480.5px;top:729px">2872</div>
<div class="t c n" style="left:493px;width:63px;top:729px">12</div>
<div class="x " style="left:70.50px;top:749px;font-size:13.4px;line-height:20px;height:20px;letter-spacing:0.014px;margin-left:-1.07px;">Friday, December 03, 2021</div>
<div class="t c n" style="left:221px;width:94px;top:749px">6801</div>
<div class="t n" style="left:312.0px;top:749px">68</div>
<div class="t r n" style="left:232px;width:119.5px;top:749px">3</div>
<div class="t n" style="left:356.8px;top:749px">683</div>
<div class="t c n" style="left:362px;width:69px;top:749px">39</div>
<div class="t n" style="left:438.5px;top:749px">485</div>
<div class="t c n" style="left:444px;width:53px;top:749px">02</div>
<div class="t n" style="left:480.5px;top:749px">4852</div>
<div class="t c n" style="left:493px;width:63px;top:749px">23</div>
<div class="x " style="left:54.20px;top:769px;font-size:13.4px;line-height:20px;height:20px;letter-spacing:-0.009px;margin-left:-0.60px;">Saturday, December 04, 2021</div>
<div class="t c n" style="left:221px;width:94px;top:769px">4117</div>
<div class="t n" style="left:312.0px;top:769px">80</div>
<div class="t r n" style="left:232px;width:119.5px;top:769px">3</div>
<div class="t n" style="left:356.8px;top:769px">803</div>
<div class="t c n" style="left:362px;width:69px;top:769px">53</div>
<div class="t n" style="left:438.5px;top:769px">607</div>
<div class="t c n" style="left:444px;width:53px;top:769px">02</div>
<div class="t n" style="left:480.5px;top:769px">6072</div>
<div class="t c n" style="left:493px;width:63px;top:769px">10</div>
<div class="x " style="left:54.20px;top:789px;font-size:13.4px;line-height:20px;height:20px;letter-spacing:-0.009px;margin-left:-0.60px;">Saturday, December 04, 2021</div>
<div class="t c n" style="left:221px;width:94px;top:789px">6057</div>
<div class="t n" style="left:312.0px;top:789px">87</div>
<div class="t r n" style="left:232px;width:119.5px;top:789px">3</div>
<div class="t n" style="left:356.8px;top:789px">873</div>
<div class="t c n" style="left:362px;width:69px;top:789px">35</div>
<div class="t n" style="left:438.5px;top:789px">680</div>
<div class="t c n" style="left:444px;width:53px;top:789px">02</div>
<div class="t n" style="left:480.5px;top:789px">6802</div>
<div class="t c n" style="left:493px;width:63px;top:789px">24</div>
<div class="x " style="left:26.00px;top:809px;font-size:13.4px;line-height:20px;height:20px;transform:scaleX(0.9606);margin-left:-0.51px;">50W2021</div>
<div class="x " style="left:58.20px;top:829px;font-size:13.4px;line-height:20px;height:20px;letter-spacing:0.091px;margin-left:-1.07px;">Monday, December 06, 2021</div>
<div class="t c n" style="left:221px;width:94px;top:829px">1579</div>
<div class="t n" style="left:312.0px;top:829px">26</div>
<div class="t r n" style="left:232px;width:119.5px;top:829px">2</div>
<div class="t n" style="left:356.8px;top:829px">262</div>
<div class="t c n" style="left:362px;width:69px;top:829px">65</div>
<div class="x " style="left:58.20px;top:849px;font-size:13.4px;line-height:20px;height:20px;letter-spacing:0.091px;margin-left:-1.07px;">Monday, December 06, 2021</div>
<div class="t c n" style="left:221px;width:94px;top:849px">4157</div>
<div class="t n" style="left:312.0px;top:849px">28</div>
<div class="t r n" style="left:232px;width:119.5px;top:849px">2</div>
<div class="t n" style="left:356.8px;top:849px">282</div>
<div class="t c n" style="left:362px;width:69px;top:849px">82</div>
<div class="x " style="left:57.50px;top:869px;font-size:13.4px;line-height:20px;height:20px;letter-spacing:-0.045px;margin-left:-0.27px;">Tuesday, December 07, 2021</div>
<div class="t c n" style="left:221px;width:94px;top:869px">6557</div>
<div class="t n" style="left:312.0px;top:869px">63</div>
<div class="t r n" style="left:232px;width:119.5px;top:869px">2</div>
<div class="t n" style="left:356.8px;top:869px">632</div>
<div class="t c n" style="left:362px;width:69px;top:869px">108</div>
<div class="x " style="left:57.50px;top:889px;font-size:13.4px;line-height:20px;height:20px;letter-spacing:-0.045px;margin-left:-0.27px;">Tuesday, December 07, 2021</div>
<div class="t c n" style="left:221px;width:94px;top:889px">2685</div>
<div class="t n" style="left:312.0px;top:889px">65</div>
<div class="t r n" style="left:232px;width:119.5px;top:889px">2</div>
<div class="t n" style="left:356.8px;top:889px">652</div>
<div class="t c n" style="left:362px;width:69px;top:889px">83</div>
<div class="x " style="left:35.80px;top:909px;font-size:13.4px;line-height:20px;height:20px;letter-spacing:0.025px;margin-left:-0.00px;">Wednesday, December 08, 2021</div>
<div class="t c n" style="left:221px;width:94px;top:909px">8779</div>
<div class="t n" style="left:312.0px;top:909px">68</div>
<div class="t r n" style="left:232px;width:119.5px;top:909px">2</div>
<div class="t n" style="left:356.8px;top:909px">682</div>
<div class="t c n" style="left:362px;width:69px;top:909px">102</div>
<div class="x " style="left:35.80px;top:929px;font-size:13.4px;line-height:20px;height:20px;letter-spacing:0.025px;margin-left:-0.00px;">Wednesday, December 08, 2021</div>
<div class="t c n" style="left:221px;width:94px;top:929px">6889</div>
<div class="t n" style="left:312.0px;top:929px">79</div>
<div class="t r n" style="left:232px;width:119.5px;top:929px">2</div>
<div class="t n" style="left:356.8px;top:929px">792</div>
<div class="t c n" style="left:362px;width:69px;top:929px">91</div>
<div class="x " style="left:52.10px;top:949px;font-size:13.4px;line-height:20px;height:20px;letter-spacing:-0.027px;margin-left:-0.27px;">Thursday, December 09, 2021</div>
<div class="t c n" style="left:221px;width:94px;top:949px">2245</div>
<div class="t n" style="left:312.0px;top:949px">85</div>
<div class="t r n" style="left:232px;width:119.5px;top:949px">2</div>
<div class="t n" style="left:356.8px;top:949px">852</div>
<div class="t c n" style="left:362px;width:69px;top:949px">88</div>
<div class="x " style="left:52.10px;top:969px;font-size:13.4px;line-height:20px;height:20px;letter-spacing:-0.027px;margin-left:-0.27px;">Thursday, December 09, 2021</div>
<div class="t c n" style="left:221px;width:94px;top:969px">2857</div>
<div class="t n" style="left:312.0px;top:969px">87</div>
<div class="t r n" style="left:232px;width:119.5px;top:969px">2</div>
<div class="t n" style="left:356.8px;top:969px">872</div>
<div class="t c n" style="left:362px;width:69px;top:969px">107</div>
<div class="x " style="left:1220.70px;top:171px;font-size:13.4px;line-height:20px;height:20px;transform:scaleX(0.8556);margin-left:-0.92px;">LEFT 3</div>
<div class="x " style="left:1311.50px;top:171px;font-size:13.4px;line-height:20px;height:20px;transform:scaleX(0.8554);margin-left:-0.92px;">RIGHT</div>
<div class="x " style="left:996.90px;top:229px;font-size:13.4px;line-height:20px;height:20px;transform:scaleX(0.8680);margin-left:-0.93px;">BASE</div>
<div class="x " style="left:1111.20px;top:229px;font-size:13.4px;line-height:20px;height:20px;transform:scaleX(0.8925);margin-left:-0.24px;">TRI</div>
<div class="x " style="left:1203.00px;top:229px;font-size:13.4px;line-height:20px;height:20px;transform:scaleX(0.9170);margin-left:-0.61px;">2D</div>
<div class="x " style="left:1231.30px;top:229px;font-size:13.4px;line-height:20px;height:20px;transform:scaleX(1.0627);margin-left:-1.14px;">Relative</div>
<div class="x " style="left:1299.00px;top:229px;font-size:13.4px;line-height:20px;height:20px;transform:scaleX(0.9170);margin-left:-0.61px;">2D</div>
<div class="x " style="left:1328.30px;top:229px;font-size:13.4px;line-height:20px;height:20px;transform:scaleX(1.0627);margin-left:-1.14px;">Relative</div>
<svg class="ab" style="left:0;top:130px" width="1345" height="860" viewBox="0 0 1345 860">
<line x1="554" y1="0" x2="554" y2="860" stroke="#ff1a0a" stroke-width="2.2" stroke-dasharray="10.5 3.4 2.800 3.3" stroke-dashoffset="1.4"/>
<line x1="739" y1="0" x2="739" y2="860" stroke="#ff1a0a" stroke-width="2.2" stroke-dasharray="10.5 3.4 2.800 3.3" stroke-dashoffset="1.4"/>
<line x1="944.4" y1="0" x2="944.4" y2="860" stroke="#ff1a0a" stroke-width="2.2" stroke-dasharray="10.5 3.4 2.800 3.3" stroke-dashoffset="1.4"/>
<line x1="1067.5" y1="59" x2="1067.5" y2="117" stroke="#ff1a0a" stroke-width="1" stroke-dasharray="3.6 1.5" stroke-dashoffset="0"/>
<line x1="1172.5" y1="0" x2="1172.5" y2="117" stroke="#ff1a0a" stroke-width="1" stroke-dasharray="3.6 1.5" stroke-dashoffset="2"/>
<line x1="1067.5" y1="117" x2="1067.5" y2="860" stroke="#ff1a0a" stroke-width="1" stroke-dasharray="11.5 2.5 3 3" stroke-dashoffset="-1.8"/>
<line x1="1172.5" y1="117" x2="1172.5" y2="860" stroke="#ff1a0a" stroke-width="1" stroke-dasharray="3 2 7 2 3.5 2.5" stroke-dashoffset="-1.5"/>
<line x1="1286.2" y1="0" x2="1286.2" y2="117" stroke="#ff1a0a" stroke-width="2.2" stroke-dasharray="9 2.7" stroke-dashoffset="6.5"/>
<line x1="1286.2" y1="117" x2="1286.2" y2="860" stroke="#ff1a0a" stroke-width="2.2" stroke-dasharray="9.900 1.76" stroke-dashoffset="8.440000000000001"/>
</svg>
<div class="gbtn" style="left:63.8px;top:135px;width:145.10000000000002px;height:33.19999999999999px"></div>
<div class="x bt" style="left:128.55px;top:141.2px;font-size:13.2px;line-height:20px;height:20px;transform:scaleX(1.0058);margin-left:-0.00px;">A1</div>
<div class="gbtn" style="left:63.8px;top:172.9px;width:145.10000000000002px;height:31.19999999999999px"></div>
<div class="x bt" style="left:105.35px;top:179.7px;font-size:13.2px;line-height:20px;height:20px;transform:scaleX(0.9165);margin-left:-0.97px;">LAST ROW</div>
<div class="btn" style="left:309.1px;top:134px;width:86.79999999999995px;height:32.69999999999999px"></div>
<div class="x bt" style="left:327.10px;top:141.0px;font-size:13.2px;line-height:20px;height:20px;transform:scaleX(0.9375);margin-left:-0.00px;">WK PAIR</div>
<div class="btn" style="left:307px;top:172.1px;width:63px;height:33.599999999999994px"></div>
<div class="x bt" style="left:319.75px;top:178.9px;font-size:13.2px;line-height:20px;height:20px;transform:scaleX(0.8270);margin-left:-0.87px;">E SETS</div>
<div class="btn" style="left:308px;top:210.2px;width:62.80000000000001px;height:33.80000000000001px"></div>
<div class="x bt" style="left:319.65px;top:217.1px;font-size:13.2px;line-height:20px;height:20px;transform:scaleX(0.8370);margin-left:-0.55px;">G SETS</div>
<div class="btn" style="left:440px;top:134px;width:87px;height:32.69999999999999px"></div>
<div class="x bt" style="left:464.45px;top:141.0px;font-size:13.2px;line-height:20px;height:20px;transform:scaleX(0.8391);margin-left:-0.22px;">TRIPLE</div>
<div class="btn" style="left:440px;top:172.1px;width:63.19999999999999px;height:33.599999999999994px"></div>
<div class="x bt" style="left:453.90px;top:178.9px;font-size:13.2px;line-height:20px;height:20px;transform:scaleX(0.8041);margin-left:-0.16px;">J SETS</div>
<div class="btn" style="left:441.3px;top:210.2px;width:62.89999999999998px;height:33.80000000000001px"></div>
<div class="x bt" style="left:454.60px;top:217.1px;font-size:13.2px;line-height:20px;height:20px;transform:scaleX(0.8371);margin-left:-0.88px;">L SETS</div>
<div class="btn" style="left:554.1px;top:134px;width:185.10000000000002px;height:32.69999999999999px"></div>
<div class="x bt" style="left:619.50px;top:141.0px;font-size:13.2px;line-height:20px;height:20px;transform:scaleX(0.9296);margin-left:-0.98px;">PAIR TOP</div>
<div class="btn" style="left:599px;top:171.3px;width:91.70000000000005px;height:32.89999999999998px"></div>
<div class="x bt" style="left:617.45px;top:177.8px;font-size:13.2px;line-height:20px;height:20px;transform:scaleX(0.8569);margin-left:-0.23px;">TOP SETS</div>
<div class="btn" style="left:760px;top:134px;width:185px;height:32.69999999999999px"></div>
<div class="x bt" style="left:819.45px;top:141.0px;font-size:13.2px;line-height:20px;height:20px;transform:scaleX(0.8747);margin-left:-0.23px;">TRIPLE TOP</div>
<div class="btn" style="left:796px;top:172.2px;width:92px;height:32.0px"></div>
<div class="x bt" style="left:803.55px;top:178.2px;font-size:13.2px;line-height:20px;height:20px;transform:scaleX(0.8669);margin-left:-0.23px;">TOP TRI SETS</div>
<div class="btn" style="left:959.4px;top:134px;width:208.80000000000007px;height:32.69999999999999px"></div>
<div class="x bt" style="left:1016.10px;top:141.0px;font-size:13.2px;line-height:20px;height:20px;transform:scaleX(0.9201);margin-left:-0.97px;">PAIR BASE &amp; TRI</div>
<div class="btn" style="left:967px;top:171.3px;width:92.09999999999991px;height:32.29999999999998px"></div>
<div class="x bt" style="left:982.90px;top:177.4px;font-size:13.2px;line-height:20px;height:20px;transform:scaleX(0.8405);margin-left:-0.89px;">BASE SETS</div>
<div class="btn" style="left:1071.3px;top:171.3px;width:91.70000000000005px;height:32.29999999999998px"></div>
<div class="x bt" style="left:1092.60px;top:177.4px;font-size:13.2px;line-height:20px;height:20px;transform:scaleX(0.8378);margin-left:-0.22px;">TRI SETS</div>
<div class="btn" style="left:1193.2px;top:134px;width:187.79999999999995px;height:32.69999999999999px"></div>
<div class="x bt" style="left:1259.65px;top:141.0px;font-size:13.2px;line-height:20px;height:20px;transform:scaleX(0.8964);margin-left:-0.95px;">RELATIVE</div>
<svg class="ab" style="left:0;top:0" width="1345" height="1026" viewBox="0 0 1345 1026">
<g fill="none" stroke="#000">
<path d="M86.500 555.6L200 556L311.500 557.6" stroke-width="4.900" stroke-linecap="round"/>
<rect x="305.5" y="552.5" width="256" height="280.5" stroke-width="5"/>
<rect x="309.5" y="707.6" width="228" height="110.800" stroke-width="4.900"/>
<path d="M538 707.5L716 624.5" stroke-width="5.900" stroke-linecap="round"/>
</g>
<rect x="686.4" y="573.4" width="524" height="338" fill="#fff" stroke="#000" stroke-width="4.9"/>
<path d="M686 638.5L716 624.5" stroke="#000" stroke-width="5.900" stroke-linecap="round"/>
</svg>
<div class="x " style="left:739.80px;top:616px;font-size:13.4px;line-height:20px;height:20px;letter-spacing:0.520px;margin-left:-0.54px;">example</div>
<div class="x " style="left:739.80px;top:652px;font-size:13.4px;line-height:20px;height:20px;letter-spacing:0.367px;margin-left:-0.87px;">i want to see only the</div>
<div class="x " style="left:739.80px;top:670px;font-size:13.4px;line-height:20px;height:20px;letter-spacing:0.191px;margin-left:-0.80px;">pair that is only 3</div>
<div class="x " style="left:739.80px;top:688px;font-size:13.4px;line-height:20px;height:20px;letter-spacing:0.331px;margin-left:-0.20px;">times and exclude the</div>
<div class="x " style="left:739.80px;top:706px;font-size:13.4px;line-height:20px;height:20px;letter-spacing:0.293px;margin-left:-0.80px;">pairs below 3 times</div>
<div class="ab" style="left:0;top:990px;width:1345px;height:28px;background:#e6e6e6"></div>
<div class="ab" style="left:0;top:990px;width:1345px;height:1px;background:#9e9e9e"></div>
<div class="ab" style="left:0;top:991px;width:1345px;height:1px;background:#d6d6d6"></div>
<div class="ab" style="left:0;top:1018px;width:1345px;height:1px;background:#c9c9c9"></div>
<div class="ab" style="left:0;top:1019px;width:1345px;height:7px;background:#f1f1f1"></div>
<svg class="ab" style="left:14px;top:997px" width="40" height="14"><path d="M7.500 3v7.200l-4.300-3.600z" fill="#c6c6c6"/><path d="M31.500 2.400v8.400l5-4.200z" fill="#2b4a3a"/></svg>
<div class="ab" style="left:90px;top:990px;width:66px;height:25px;background:#fff;border-left:1px solid #ababab;border-right:1px solid #ababab"></div>
<div class="ab" style="left:90px;top:1013px;width:66px;height:2px;background:#17664a"></div>
<div class="x " style="left:102.40px;top:994px;font-size:13.3px;line-height:20px;height:20px;color:#1e6b43;font-weight:bold;transform:scaleX(0.9241);margin-left:-0.31px;">Sheet1</div>
<div class="x tab" style="left:168.60px;top:994px;font-size:13.3px;line-height:20px;height:20px;transform:scaleX(0.9983);margin-left:-1.06px;">Match 2D</div>
<div class="x tab" style="left:250.30px;top:994px;font-size:13.3px;line-height:20px;height:20px;transform:scaleX(0.8296);margin-left:-0.88px;">E SETS</div>
<div class="x tab" style="left:314.70px;top:994px;font-size:13.3px;line-height:20px;height:20px;transform:scaleX(0.8329);margin-left:-0.55px;">G SETS</div>
<div class="x tab" style="left:381.40px;top:994px;font-size:13.3px;line-height:20px;height:20px;transform:scaleX(0.8139);margin-left:-0.16px;">J SETS</div>
<div class="x tab" style="left:444.60px;top:994px;font-size:13.3px;line-height:20px;height:20px;transform:scaleX(0.8446);margin-left:-0.90px;">L SETS</div>
<div class="x tab" style="left:507.30px;top:994px;font-size:13.3px;line-height:20px;height:20px;transform:scaleX(0.8445);margin-left:-0.90px;">R SETS</div>
<div class="x tab" style="left:573.00px;top:994px;font-size:13.3px;line-height:20px;height:20px;transform:scaleX(0.8442);margin-left:-0.22px;">T SETS</div>
<div class="x tab" style="left:638.30px;top:994px;font-size:13.3px;line-height:20px;height:20px;transform:scaleX(0.8308);margin-left:-0.33px;">Z SETS</div>
<div class="x tab" style="left:703.50px;top:994px;font-size:13.3px;line-height:20px;height:20px;transform:scaleX(0.8184);margin-left:-0.00px;">AB SETS</div>
<div class="x tab" style="left:777.30px;top:994px;font-size:13.3px;line-height:20px;height:20px;transform:scaleX(0.8238);margin-left:-0.00px;">AE SETS</div>
<div class="x tab" style="left:850.60px;top:994px;font-size:13.3px;line-height:20px;height:20px;transform:scaleX(0.8333);margin-left:-0.00px;">AG SETS</div>
<div class="x tab" style="left:925.30px;top:994px;font-size:13.3px;line-height:20px;height:20px;transform:scaleX(0.8301);margin-left:-0.00px;">AI SETS</div>
<div class="x tab" style="left:995.60px;top:994px;font-size:13.3px;line-height:20px;height:20px;transform:scaleX(0.8418);margin-left:-0.00px;">AK SETS</div>
<div class="x tab" style="left:1069.50px;top:994px;font-size:13.3px;line-height:20px;height:20px;transform:scaleX(0.8472);margin-left:-0.00px;">AX SETS</div>
<div class="x tab" style="left:1144.40px;top:994px;font-size:13.3px;line-height:20px;height:20px;transform:scaleX(0.8421);margin-left:-0.00px;">AZ SETS</div>
<div class="x tab" style="left:1218.40px;top:994px;font-size:13.3px;line-height:20px;height:20px;transform:scaleX(0.8037);margin-left:-0.86px;">BF</div>
<div class="sep" style="left:238px"></div>
<div class="sep" style="left:302px"></div>
<div class="sep" style="left:368px"></div>
<div class="sep" style="left:431px"></div>
<div class="sep" style="left:495px"></div>
<div class="sep" style="left:560px"></div>
<div class="sep" style="left:625.5px"></div>
<div class="sep" style="left:690px"></div>
<div class="sep" style="left:764px"></div>
<div class="sep" style="left:837px"></div>
<div class="sep" style="left:912px"></div>
<div class="sep" style="left:982px"></div>
<div class="sep" style="left:1056px"></div>
<div class="sep" style="left:1131px"></div>
<div class="sep" style="left:1205px"></div>
<svg class="ab" style="left:1242px;top:1004px" width="14" height="5"><g fill="#0f5236"><rect x="0.900" y="1.300" width="2.2" height="2.300"/><rect x="4.900" y="1.300" width="2.2" height="2.300"/><rect x="8.900" y="1.300" width="2.2" height="2.3"/></g></svg>
<svg class="ab" style="left:1265px;top:994px" width="20" height="20"><circle cx="9.7" cy="9.800" r="7.6" fill="none" stroke="#6a6a6a" stroke-width="1.200"/><path d="M9.700 5.600v8.400M5.500 9.800h8.400" stroke="#5a5a5a" stroke-width="1.900"/></svg>
<svg class="ab" style="left:1302px;top:999px" width="4" height="12"><g fill="#b2b2b2"><rect x="0.600" y="0.500" width="2" height="1.900"/><rect x="0.600" y="4.100" width="2" height="1.900"/><rect x="0.600" y="7.800" width="2" height="1.9"/></g></svg>
<div class="ab" style="left:1320px;top:997px;width:15px;height:15px;background:#fff;border:1px solid #c4c4c4"></div>
<svg class="ab" style="left:1324px;top:1000px" width="8" height="9"><path d="M5.800 0.500v7l-4.300-3.500z" fill="#555"/></svg>
<div class="ab" style="left:1335px;top:997px;width:12px;height:15px;background:#fff;border:1px solid #c4c4c4"></div>
</body></html>
